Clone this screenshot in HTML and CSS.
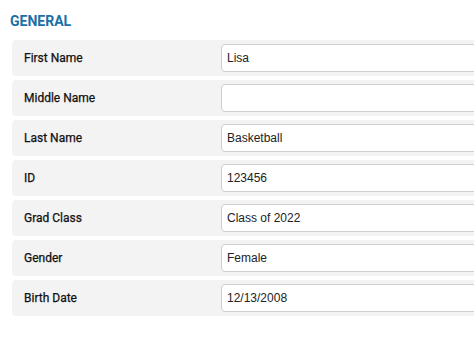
FILE: index.html
```html
<!DOCTYPE html>
<html>
<head>
<meta charset="utf-8">
<link rel="stylesheet" href="styles.css">
</head>
<body>
<div class="page">
  <h2 class="title">GENERAL</h2>
  <div class="rows">
    <div class="row"><div class="label">First Name</div><div class="field">Lisa</div></div>
    <div class="row"><div class="label">Middle Name</div><div class="field"></div></div>
    <div class="row"><div class="label">Last Name</div><div class="field">Basketball</div></div>
    <div class="row"><div class="label">ID</div><div class="field">123456</div></div>
    <div class="row"><div class="label">Grad Class</div><div class="field">Class of 2022</div></div>
    <div class="row"><div class="label">Gender</div><div class="field">Female</div></div>
    <div class="row"><div class="label">Birth Date</div><div class="field">12/13/2008</div></div>
  </div>
</div>
</body>
</html>
```
FILE: styles.css
```css
html, body {
  margin: 0;
  padding: 0;
  background: #ffffff;
}
body {
  width: 474px;
  height: 338px;
  overflow: hidden;
  font-family: Roboto, "Liberation Sans", sans-serif;
}
.page {
  padding: 12px 0 0 10px;
  overflow: hidden;
}
.title {
  margin: 0;
  font-size: 14px;
  line-height: 18px;
  font-weight: 700;
  color: #1d6fa5;
}
.rows {
  margin-top: 10px;
  margin-left: 2px;
  margin-right: -30px;
  display: flex;
  flex-direction: column;
  gap: 4px;
}
.row {
  height: 36px;
  background: #f3f3f3;
  border-radius: 4px;
  display: flex;
  align-items: center;
}
.label {
  width: 197px;
  padding-left: 12px;
  font-size: 12px;
  font-weight: 400;
  color: #111111;
  -webkit-text-stroke: 0.25px #111111;
}
.field {
  flex: 1;
  height: 28px;
  box-sizing: border-box;
  background: #ffffff;
  border: 1px solid #cfcfcf;
  border-radius: 4px;
  padding-left: 5px;
  font-family: "Liberation Sans", Arial, sans-serif;
  font-size: 12px;
  line-height: 26px;
  color: #222222;
}
```
